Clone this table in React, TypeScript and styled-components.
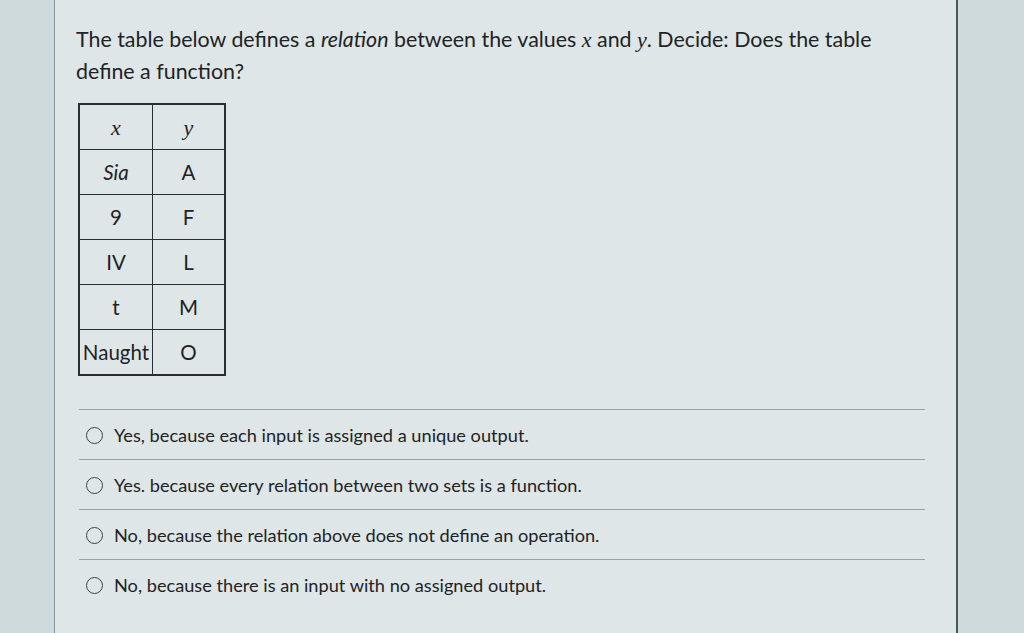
import styled, { createGlobalStyle } from 'styled-components'

const GlobalStyle = createGlobalStyle`
  html, body {
    margin: 0;
    padding: 0;
    background: #cfdadd;
  }
  body {
    font-family: Lato, "Open Sans", "Liberation Sans", sans-serif;
    color: #1f2325;
  }
`

const Screen = styled.div`
  display: flex;
  height: 633px;
  overflow: hidden;
`

const Gutter = styled.div`
  width: 54px;
  flex-shrink: 0;
`

const Panel = styled.main`
  width: 904px;
  flex-shrink: 0;
  background: #dee6e8;
  border-left: 1px solid #8d999c;
  border-right: 2px solid #4d5659;
  padding: 23px 0 0 21px;
  box-sizing: border-box;
`

const Question = styled.p`
  margin: 0;
  font-size: 21.4px;
  line-height: 32px;
  width: 820px;
`

const MathVar = styled.span`
  font-family: "Liberation Serif", "DejaVu Serif", serif;
  font-style: italic;
  font-size: 22px;
  line-height: 1;
`

const RelationTable = styled.table`
  margin: 16px 0 0 2px;
  border-collapse: collapse;
  border: 2px solid #2a2e30;

  td, th {
    border: 1.5px solid #2a2e30;
    height: 44px;
    padding: 0;
    text-align: center;
    font-size: 20.5px;
    font-weight: 400;
  }
  td:first-child, th:first-child {
    width: 72px;
  }
  td:last-child, th:last-child {
    width: 71px;
  }
`

const Choices = styled.ul`
  list-style: none;
  margin: 33px 0 0 3px;
  padding: 0;
  width: 846px;
`

const Choice = styled.li`
  display: flex;
  align-items: center;
  gap: 11px;
  height: 50px;
  padding: 1px 0 0 7px;
  box-sizing: border-box;
  border-top: 1.5px solid #9ba3a5;
  font-size: 18.2px;
`

const Radio = styled.span`
  width: 15px;
  height: 15px;
  border: 1.5px solid #3d4244;
  border-radius: 50%;
  flex-shrink: 0;
`

const rows: Array<[string, string, boolean]> = [
  ['Sia', 'A', true],
  ['9', 'F', false],
  ['IV', 'L', false],
  ['t', 'M', false],
  ['Naught', 'O', false],
]

const answers = [
  'Yes, because each input is assigned a unique output.',
  'Yes. because every relation between two sets is a function.',
  'No, because the relation above does not define an operation.',
  'No, because there is an input with no assigned output.',
]

export default function App() {
  return (
    <>
      <GlobalStyle />
      <Screen>
        <Gutter />
        <Panel>
          <Question>
            The table below defines a <em>relation</em> between the values <MathVar>x</MathVar> and{' '}
            <MathVar>y</MathVar>. Decide: Does the table define a function?
          </Question>
          <RelationTable>
            <thead>
              <tr>
                <th><MathVar>x</MathVar></th>
                <th><MathVar>y</MathVar></th>
              </tr>
            </thead>
            <tbody>
              {rows.map(([x, y, italic]) => (
                <tr key={x}>
                  <td>{italic ? <em>{x}</em> : x}</td>
                  <td>{y}</td>
                </tr>
              ))}
            </tbody>
          </RelationTable>
          <Choices>
            {answers.map((a) => (
              <Choice key={a}>
                <Radio />
                {a}
              </Choice>
            ))}
          </Choices>
        </Panel>
      </Screen>
    </>
  )
}
